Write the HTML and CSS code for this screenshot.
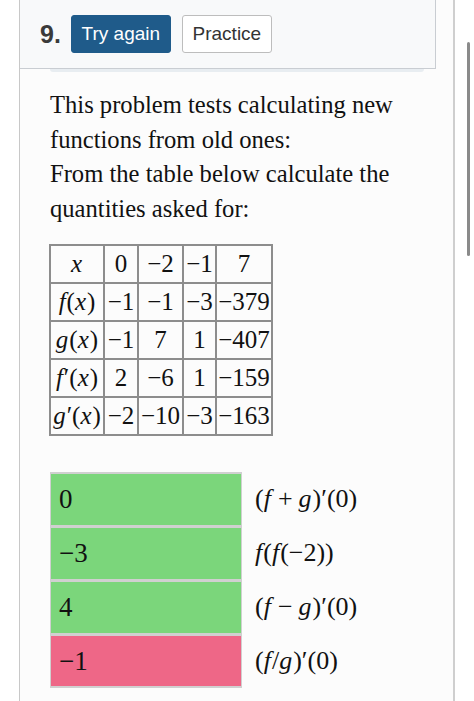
FILE: index.html
```html
<!DOCTYPE html>
<html>
<head>
<meta charset="utf-8">
<link rel="stylesheet" href="styles.css">
</head>
<body>
<div class="panel">
  <div class="header">
    <span class="num">9.</span>
    <button class="btn btn-primary">Try again</button>
    <button class="btn btn-default">Practice</button>
  </div>
  <div class="shadow"></div>
  <p class="intro">This problem tests calculating new functions from old ones:<br>From the table below calculate the quantities asked for:</p>
  <table class="vals">
    <colgroup>
      <col class="c1"><col class="c2"><col class="c3"><col class="c4"><col class="c5">
    </colgroup>
    <tr><td><i>x</i></td><td>0</td><td>−2</td><td>−1</td><td>7</td></tr>
    <tr><td><i>f</i>(<i>x</i>)</td><td>−1</td><td>−1</td><td>−3</td><td>−379</td></tr>
    <tr><td><i>g</i>(<i>x</i>)</td><td>−1</td><td>7</td><td>1</td><td>−407</td></tr>
    <tr><td><i>f</i>′(<i>x</i>)</td><td>2</td><td>−6</td><td>1</td><td>−159</td></tr>
    <tr><td><i>g</i>′(<i>x</i>)</td><td>−2</td><td>−10</td><td>−3</td><td>−163</td></tr>
  </table>
  <div class="answers">
    <div class="ans ok">0</div><div class="lbl">(<i>f</i><span class="op">+</span><i>g</i>)′(0)</div>
    <div class="ans ok">−3</div><div class="lbl"><i>f</i>(<i>f</i>(−2))</div>
    <div class="ans ok">4</div><div class="lbl">(<i>f</i><span class="op">−</span><i>g</i>)′(0)</div>
    <div class="ans bad">−1</div><div class="lbl">(<i>f</i>/<i>g</i>)′(0)</div>
  </div>
  <div class="scrollbar"></div>
</div>
</body>
</html>
```
FILE: styles.css
```css
html, body {
  margin: 0;
  padding: 0;
  background: #ffffff;
  overflow: hidden;
}
.panel {
  margin-left: 19px;
  width: 433px;
  height: 701px;
  background: #fcfcfc;
  border-left: 1px solid #c8c8c8;
  border-right: 2px solid #cfcfcf;
}
.header {
  box-sizing: border-box;
  width: 416px;
  height: 69px;
  background: #f8f9fa;
  border-right: 1px solid #c9cdd2;
  border-bottom: 1px solid #c9cdd2;
  display: flex;
  align-items: center;
  padding-left: 20px;
  gap: 10px;
}
.num {
  font-family: "Liberation Sans", Arial, sans-serif;
  font-weight: 700;
  font-size: 25px;
  color: #3a3a3a;
  margin-top: 1px;
}
.btn {
  font-family: "Liberation Sans", Arial, sans-serif;
  font-size: 19px;
  height: 38px;
  padding: 0;
  border-radius: 3px;
  margin: 0;
  white-space: nowrap;
  text-align: center;
}
.btn-primary {
  background: #1f5b8a;
  color: #ffffff;
  border: 1px solid #1f5b8a;
  width: 100px;
}
.btn-default {
  background: #ffffff;
  color: #333333;
  border: 1px solid #bdbdbd;
  width: 90px;
  margin-left: 1px;
}
.shadow {
  margin: 0 29px 0 30px;
  height: 3px;
  background: #e8edf1;
  border-radius: 0 0 4px 4px;
}
.intro {
  font-family: "Liberation Serif", "Times New Roman", serif;
  font-size: 24.6px;
  line-height: 34.5px;
  color: #111111;
  margin: 16px 0 0 30px;
  width: 380px;
}
.vals {
  border-collapse: collapse;
  table-layout: fixed;
  margin: 18px 0 0 29px;
  width: 222px;
  font-family: "Liberation Serif", "Times New Roman", serif;
  font-size: 25px;
  color: #111111;
}
.vals td {
  border: 2px solid #8d8d8d;
  height: 36px;
  padding: 0;
  text-align: center;
  white-space: nowrap;
}
.c1 { width: 54px; }
.c2 { width: 34px; }
.c3 { width: 45px; }
.c4 { width: 33px; }
.c5 { width: 56px; }
.answers {
  display: grid;
  grid-template-columns: 192px auto;
  column-gap: 13px;
  margin: 36px 0 0 30px;
}
.ans {
  height: 54px;
  box-sizing: border-box;
  border: 1px solid #d0d0d0;
  border-top-width: 2px;
  display: flex;
  align-items: center;
  padding-left: 8px;
  font-family: "Liberation Serif", "Times New Roman", serif;
  font-size: 27px;
  color: #111111;
}
.ans.ok { background: #7bd67b; }
.ans.bad { background: #ee6787; border-bottom-width: 2px; }
.lbl {
  display: flex;
  align-items: center;
  font-family: "Liberation Serif", "Times New Roman", serif;
  font-size: 26px;
  color: #111111;
}
.op { margin: 0 6px; }
.lbl i, .vals i { font-style: italic; padding-right: 1px; }
.scrollbar {
  position: absolute;
  left: 467px;
  top: 42px;
  width: 3px;
  height: 214px;
  border-radius: 2px;
  background: #8a8a8a;
}
```
